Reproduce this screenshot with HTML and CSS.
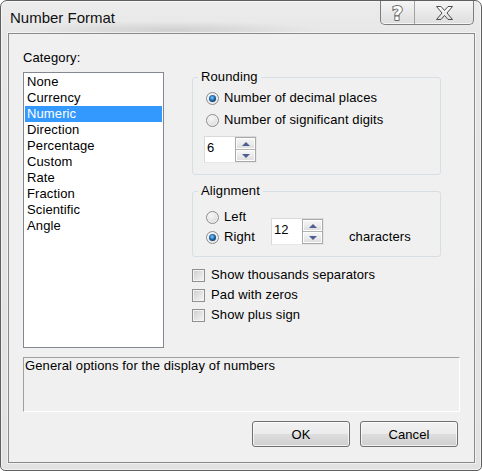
FILE: index.html
```html
<!DOCTYPE html>
<html lang="en">
<head>
<meta charset="utf-8">
<title>Number Format</title>
<link rel="stylesheet" href="styles.css">
</head>
<body>
<div class="window">
  <div class="titlebar">
    <span class="title">Number Format</span>
    <div class="caption-btns">
      <div class="cbtn help"><span class="help-glyph">?</span></div>
      <div class="cbtn close">
        <svg width="19" height="16" viewBox="0 0 19 16" aria-hidden="true">
          <defs>
            <linearGradient id="xg" x1="0" y1="0" x2="0" y2="1">
              <stop offset="0" stop-color="#ffffff"/>
              <stop offset="1" stop-color="#dcdcdc"/>
            </linearGradient>
          </defs>
          <polygon points="1.5,1.5 6,1.5 9.5,5.5 13,1.5 17.5,1.5 12,8 17.5,14.5 13,14.5 9.5,10.5 6,14.5 1.5,14.5 7,8" fill="url(#xg)" stroke="#4d4d4d" stroke-width="1" stroke-linejoin="round"/>
        </svg>
      </div>
    </div>
  </div>
  <div class="client">
    <div class="main">
      <div class="left">
        <div class="label">Category:</div>
        <ul class="listbox">
          <li>None</li>
          <li>Currency</li>
          <li class="sel">Numeric</li>
          <li>Direction</li>
          <li>Percentage</li>
          <li>Custom</li>
          <li>Rate</li>
          <li>Fraction</li>
          <li>Scientific</li>
          <li>Angle</li>
        </ul>
      </div>
      <div class="right">
        <fieldset class="group rounding">
          <legend>Rounding</legend>
          <div class="group-body">
            <div class="radio-row"><span class="radio checked"></span>Number of decimal places</div>
            <div class="radio-row second"><span class="radio"></span>Number of significant digits</div>
            <div class="spin spin-round">
              <span class="spin-text">6</span>
              <div class="spin-btns">
                <span class="sb up"><i></i></span>
                <span class="sb down"><i></i></span>
              </div>
            </div>
          </div>
        </fieldset>
        <fieldset class="group alignment">
          <legend>Alignment</legend>
          <div class="group-body align-row">
            <div class="radios">
              <div class="radio-row"><span class="radio"></span>Left</div>
              <div class="radio-row second-a"><span class="radio checked"></span>Right</div>
            </div>
            <div class="spin spin-align">
              <span class="spin-text">12</span>
              <div class="spin-btns">
                <span class="sb up"><i></i></span>
                <span class="sb down"><i></i></span>
              </div>
            </div>
            <span class="chars">characters</span>
          </div>
        </fieldset>
        <div class="checks">
          <div class="check-row"><span class="checkbox"></span>Show thousands separators</div>
          <div class="check-row"><span class="checkbox"></span>Pad with zeros</div>
          <div class="check-row"><span class="checkbox"></span>Show plus sign</div>
        </div>
      </div>
    </div>
    <div class="desc">General options for the display of numbers</div>
    <div class="buttons">
      <button class="btn">OK</button>
      <button class="btn">Cancel</button>
    </div>
  </div>
</div>
</body>
</html>
```

FILE: styles.css
```css
* { box-sizing: border-box; }

body {
  margin: 0;
  background: #ffffff;
  font-family: "Liberation Sans", Arial, sans-serif;
  font-size: 13px;
  letter-spacing: 0.12px;
  color: #000;
}

.window {
  width: 482px;
  height: 471px;
  border: 1px solid #5f5f5f;
  border-radius: 7px 7px 5px 5px;
  padding: 0 6px 7px 7px;
  display: flex;
  flex-direction: column;
  background:
    radial-gradient(ellipse 150px 9px at 170px 29px, rgba(0,0,0,0.10), rgba(0,0,0,0) 100%),
    linear-gradient(#ececec, #e6e6e6 40px, #e2e2e2);
  box-shadow: inset 0 0 0 1px rgba(255,255,255,0.55);
}

.titlebar {
  height: 32px;
  flex: none;
  display: flex;
  align-items: flex-start;
}

.title {
  padding: 7px 0 0 2px;
  font-size: 15px;
  line-height: 20px;
  letter-spacing: 0;
  color: #111;
}

.caption-btns {
  margin-left: auto;
  margin-right: 1px;
  height: 24px;
  display: flex;
  border: 1px solid #7d7d7d;
  border-top: none;
  border-radius: 0 0 5px 5px;
  overflow: hidden;
  background: linear-gradient(#f5f5f5, #e9e9e9 50%, #dedede);
  box-shadow: inset 0 -1px 0 rgba(255,255,255,0.7);
}

.cbtn {
  display: flex;
  align-items: center;
  justify-content: center;
}

.help {
  width: 34px;
  border-right: 1px solid #a3a3a3;
}

.help-glyph {
  font-family: "DejaVu Sans", "Liberation Sans", sans-serif;
  font-weight: bold;
  font-size: 19px;
  line-height: 20px;
  letter-spacing: 0;
  color: #fdfdfd;
  -webkit-text-stroke: 1.6px #4a4a4a;
  paint-order: stroke fill;
  margin-top: 1px;
}

.close {
  width: 58px;
}

.client {
  flex: 1;
  border: 1px solid #8a8a8a;
  background: #f0f0f0;
  padding: 16px 14px 0 14px;
  box-shadow: 0 0 0 1px rgba(255,255,255,0.5);
}

.main {
  display: grid;
  grid-template-columns: 141px 249px;
  column-gap: 28px;
  align-items: start;
}

.label {
  line-height: 16px;
  margin-bottom: 6px;
}

.listbox {
  list-style: none;
  margin: 0;
  height: 276px;
  border: 1px solid #828790;
  padding: 1px;
  background: #fff;
}

.listbox li {
  height: 16px;
  line-height: 16px;
  padding-left: 2px;
}

.listbox li.sel {
  background: #3399ff;
  color: #fff;
}

.right {
  padding-top: 19px;
}

.group {
  margin: 0;
  min-width: 0;
  border: 1px solid #d5dfe5;
  border-radius: 3px;
  padding: 5px 8px 11px 5px;
}

.group legend {
  padding: 0 3px;
  line-height: 16px;
}

.group-body {
  padding-left: 8px;
}

.alignment {
  margin-top: 8px;
  padding-top: 10px;
}

.radio-row {
  display: flex;
  align-items: center;
  height: 16px;
  line-height: 16px;
  white-space: nowrap;
}

.radio-row.second { margin-top: 6px; }
.radio-row.second-a { margin-top: 4px; }

.radio {
  flex: none;
  width: 13px;
  height: 13px;
  margin-right: 5px;
  border-radius: 50%;
  border: 1px solid #8b8b8b;
  background: radial-gradient(circle at 40% 35%, #f7f7f7 0, #e3e3e3 55%, #cfcfcf 100%);
  box-shadow: inset 0 0 0 1px rgba(255,255,255,0.6);
  position: relative;
}

.radio.checked::after {
  content: "";
  position: absolute;
  left: 2px;
  top: 2px;
  width: 7px;
  height: 7px;
  border-radius: 50%;
  background: radial-gradient(circle at 45% 40%, #8fd0fa 0, #2a7fc8 35%, #0d3d6c 70%, #2b8fdb 100%);
}

.spin {
  display: flex;
  width: 53px;
  height: 27px;
  border: 1px solid #d9d9d9;
  border-right-color: #e6e6e6;
  border-bottom-color: #e6e6e6;
  background: #fff;
}

.spin-round {
  margin-top: 8px;
  margin-left: -2px;
}

.spin-text {
  flex: 1;
  padding: 3px 0 0 2px;
  line-height: 16px;
}

.spin-btns {
  width: 21px;
  display: flex;
  flex-direction: column;
  border: 1px solid #a9a9a9;
}

.sb {
  flex: 1;
  display: flex;
  align-items: center;
  justify-content: center;
  background: linear-gradient(#f7f7f7, #ebebeb 50%, #dcdcdc);
  box-shadow: inset 0 0 0 1px #fdfdfd;
}

.sb.up { border-bottom: 1px solid #b3b3b3; }

.sb i {
  width: 0;
  height: 0;
  border-left: 4px solid transparent;
  border-right: 4px solid transparent;
}

.sb.up i { border-bottom: 4px solid #4e5f8f; }
.sb.down i { border-top: 4px solid #4e5f8f; }

.align-row {
  display: flex;
  align-items: flex-end;
}

.radios {
  width: 65px;
  flex: none;
}

.spin-align {
  flex: none;
}

.chars {
  margin-left: 25px;
  line-height: 16px;
}

.checks {
  margin-top: 10px;
}

.check-row {
  display: flex;
  align-items: center;
  height: 16px;
  line-height: 16px;
  margin-bottom: 4px;
  white-space: nowrap;
}

.checkbox {
  flex: none;
  width: 13px;
  height: 13px;
  margin-right: 6px;
  border: 1px solid #8e8f8f;
  background: linear-gradient(135deg, #cbcbcb 0%, #e2e2e2 50%, #f6f6f6 100%);
  box-shadow: inset 0 0 0 1px #f3f3f3;
}

.desc {
  margin-top: 9px;
  height: 55px;
  border-top: 1px solid #a0a0a0;
  border-left: 1px solid #a0a0a0;
  border-right: 1px solid #ffffff;
  border-bottom: 1px solid #ffffff;
  padding: 0 1px;
  line-height: 16px;
}

.buttons {
  margin-top: 9px;
  display: flex;
  justify-content: flex-end;
  gap: 10px;
  padding-right: 2px;
}

.btn {
  width: 98px;
  height: 26px;
  margin: 0;
  padding: 0;
  border: 1px solid #707070;
  border-radius: 3px;
  background: linear-gradient(#f2f2f2 0%, #ebebeb 48%, #dddddd 52%, #cfcfcf 100%);
  box-shadow: inset 0 0 0 1px rgba(255,255,255,0.7);
  font-family: "Liberation Sans", Arial, sans-serif;
  font-size: 13px;
  letter-spacing: 0.12px;
  color: #000;
}
```
